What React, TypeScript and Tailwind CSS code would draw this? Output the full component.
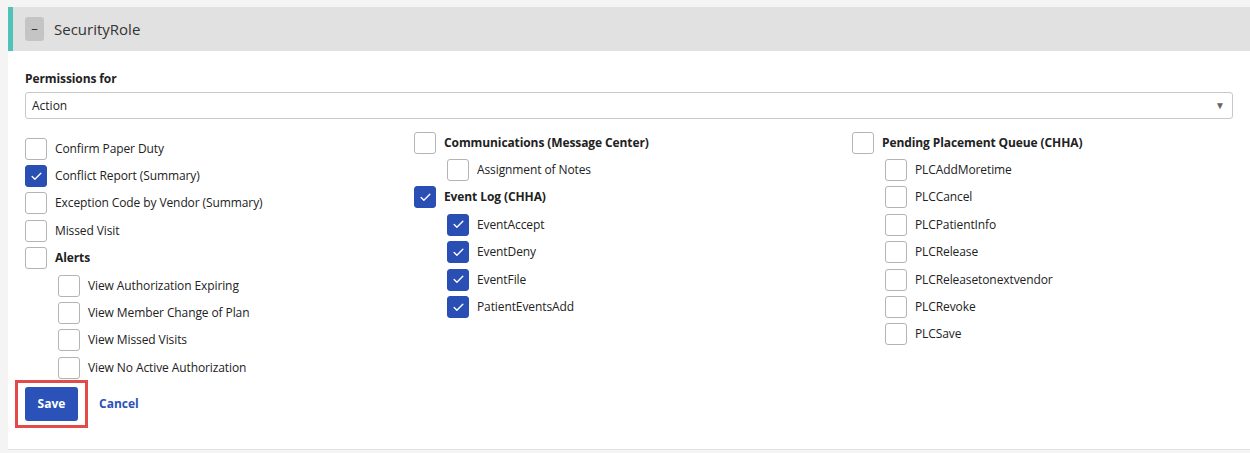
import { Check } from "lucide-react";

type Perm = { label: string; checked?: boolean; bold?: boolean; children?: Perm[] };

const colOne: Perm[] = [
  { label: "Confirm Paper Duty" },
  { label: "Conflict Report (Summary)", checked: true },
  { label: "Exception Code by Vendor (Summary)" },
  { label: "Missed Visit" },
  {
    label: "Alerts",
    bold: true,
    children: [
      { label: "View Authorization Expiring" },
      { label: "View Member Change of Plan" },
      { label: "View Missed Visits" },
      { label: "View No Active Authorization" },
    ],
  },
];

const colTwo: Perm[] = [
  {
    label: "Communications (Message Center)",
    bold: true,
    children: [{ label: "Assignment of Notes" }],
  },
  {
    label: "Event Log (CHHA)",
    bold: true,
    checked: true,
    children: [
      { label: "EventAccept", checked: true },
      { label: "EventDeny", checked: true },
      { label: "EventFile", checked: true },
      { label: "PatientEventsAdd", checked: true },
    ],
  },
];

const colThree: Perm[] = [
  {
    label: "Pending Placement Queue (CHHA)",
    bold: true,
    children: [
      { label: "PLCAddMoretime" },
      { label: "PLCCancel" },
      { label: "PLCPatientInfo" },
      { label: "PLCRelease" },
      { label: "PLCReleasetonextvendor" },
      { label: "PLCRevoke" },
      { label: "PLCSave" },
    ],
  },
];

function Box({ checked }: { checked?: boolean }) {
  return (
    <span
      className={`flex h-[22px] w-[22px] shrink-0 items-center justify-center rounded-[3px] border ${
        checked ? "border-[#2a4fb4] bg-[#2a4fb4]" : "border-[#b4b4b4] bg-white"
      }`}
    >
      {checked ? <Check className="h-[13px] w-[13px] text-white" strokeWidth={2.5} /> : null}
    </span>
  );
}

function Row({ item }: { item: Perm }) {
  return (
    <>
      <div className="flex h-[27.4px] items-center gap-[8px]">
        <Box checked={item.checked} />
        <span className={`text-[12px] tracking-[-0.1px] text-[#222] ${item.bold ? "font-bold" : ""}`}>
          {item.label}
        </span>
      </div>
      {item.children ? (
        <div className="pl-[33px]">
          {item.children.map((c) => (
            <Row key={c.label} item={c} />
          ))}
        </div>
      ) : null}
    </>
  );
}

export default function App() {
  return (
    <div
      className="min-h-[453px] bg-[#f4f4f4] pl-[8px] pt-[7px]"
      style={{ fontFamily: '"Open Sans", "Noto Sans", sans-serif' }}
    >
      <div className="h-[443px] border-b border-[#e2e2e2] bg-white">
        <div className="flex h-[44px] items-center border-l-[5px] border-[#4fc3b9] bg-[#e1e1e1] pl-[12px]">
          <span className="flex h-[24px] w-[19px] items-center justify-center rounded-[3px] bg-[#c4c4c4] text-[13px] text-[#333]">
            –
          </span>
          <span className="ml-[10px] text-[15px] text-[#333]">SecurityRole</span>
        </div>

        <div className="px-[17px]">
          <p className="mt-[19px] text-[12px] font-bold tracking-[-0.1px] text-[#222]">Permissions for</p>
          <div className="mt-[4px] flex h-[27px] items-center justify-between rounded-[3px] border border-[#c8c8c8] pl-[6px] pr-[7px]">
            <span className="text-[12px] text-[#222]">Action</span>
            <span className="text-[10px] text-[#666]">▼</span>
          </div>

          <div className="mt-[10px] flex">
            <div className="w-[389px] pt-[6px]">
              {colOne.map((p) => (
                <Row key={p.label} item={p} />
              ))}
            </div>
            <div className="w-[438px]">
              {colTwo.map((p) => (
                <Row key={p.label} item={p} />
              ))}
            </div>
            <div>
              {colThree.map((p) => (
                <Row key={p.label} item={p} />
              ))}
            </div>
          </div>

          <div className="-ml-[10px] -mt-[2px] flex items-center">
            <div className="border-[3px] border-[#e34a4a] px-[7px] py-[4px]">
              <button className="h-[34px] w-[53px] rounded-[3px] bg-[#2a52b8] text-[12px] font-bold text-white">
                Save
              </button>
            </div>
            <span className="ml-[11px] text-[12px] font-bold text-[#2a52b8]">Cancel</span>
          </div>
        </div>
      </div>
    </div>
  );
}
